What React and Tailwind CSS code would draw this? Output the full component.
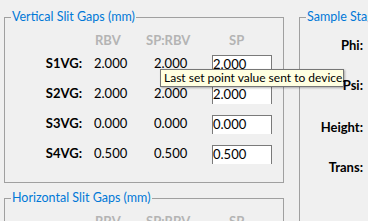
import React from 'react';

const font = { fontFamily: 'Lato, "Segoe UI", "Noto Sans", sans-serif' };

const rows = [
    { name: 'S1VG:', rbv: '2.000', sprbv: '2.000', sp: '2.000' },
    { name: 'S2VG:', rbv: '2.000', sprbv: '2.000', sp: '2.000' },
    { name: 'S3VG:', rbv: '0.000', sprbv: '0.000', sp: '0.000' },
    { name: 'S4VG:', rbv: '0.500', sprbv: '0.500', sp: '0.500' },
];

const GroupBox = ({ title, className, children }) => (
    <div className={`relative border border-[#a0a0a0] ${className}`}>
        <span className="absolute -top-[10px] left-[6px] whitespace-nowrap bg-[#f0f0f0] px-[1px] text-[12.5px] leading-[18px] text-[#0078d7]">
            {title}
        </span>
        {children}
    </div>
);

const HeaderRow = () => (
    <div className="flex h-[17px] items-center text-[13px] font-bold text-[#b4b4b4]">
        <span className="ml-[90px] w-[51px]">RBV</span>
        <span className="w-[83px]">SP:RBV</span>
        <span>SP</span>
    </div>
);

const App = () => {
    return (
        <div className="relative h-[221px] w-[368px] overflow-hidden bg-[#f0f0f0] text-black" style={font}>
            <div className="flex gap-[15px] pl-[4px] pt-[17px]">
                <div className="flex flex-col gap-[15px]">
                    <GroupBox title="Vertical Slit Gaps (mm)" className="h-[166px] w-[280px]">
                        <div className="pt-[14px]">
                            <HeaderRow />
                            {rows.map((r) => (
                                <div key={r.name} className="flex h-[30px] items-center text-[13px]">
                                    <span className="w-[77px] text-right font-bold">{r.name}</span>
                                    <span className="ml-[12px] w-[60px]">{r.rbv}</span>
                                    <span className="w-[58px]">{r.sprbv}</span>
                                    <div className="flex h-[19px] w-[60px] items-center border border-b-0 border-[#7a7a7a] bg-white leading-none">
                                        {r.sp}
                                    </div>
                                </div>
                            ))}
                        </div>
                    </GroupBox>
                    <GroupBox title="Horizontal Slit Gaps (mm)" className="h-[100px] w-[280px]">
                        <div className="pt-[14px]">
                            <HeaderRow />
                        </div>
                    </GroupBox>
                </div>
                <GroupBox title="Sample Stage" className="h-[230px] w-[100px] shrink-0">
                    <div className="flex flex-col items-end pr-[35px] pt-[18px] text-[13px] font-bold">
                        <span className="flex h-[20px] items-center">Phi:</span>
                        <span className="mt-[20px] flex h-[20px] items-center">Psi:</span>
                        <span className="mt-[22px] flex h-[20px] items-center">Height:</span>
                        <span className="mt-[20px] flex h-[20px] items-center">Trans:</span>
                    </div>
                </GroupBox>
            </div>
            <div className="absolute left-[160px] top-[69px] flex h-[18px] w-[184px] items-center whitespace-nowrap border border-[#767676] bg-[#ffffe1] pl-[3px] text-[12px] shadow-[1px_1px_2px_rgba(0,0,0,0.3)]">
                Last set point value sent to device.
            </div>
        </div>
    );
};

export default App;
